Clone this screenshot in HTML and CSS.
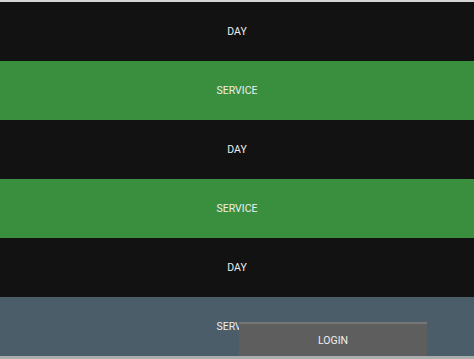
FILE: index.html
```html
<!DOCTYPE html>
<html lang="en">
<head>
    <meta charset="UTF-8">
    <meta name="viewport" content="width=device-width, initial-scale=1.0">
    <title>Schedule</title>
    <link rel="stylesheet" href="styles.css">
</head>
<body>
    <div id="screen">
        <div class="list">
            <div class="row day">DAY</div>
            <div class="row service">SERVICE</div>
            <div class="row day">DAY</div>
            <div class="row service">SERVICE</div>
            <div class="row day">DAY</div>
            <div class="row current">SERVICE</div>
        </div>
        <button class="login">LOGIN</button>
    </div>
    <div class="footer"></div>
</body>
</html>
```
FILE: styles.css
```css
html, body {
    height: 100%;
}
body {
    font-family: Roboto, "Liberation Sans", sans-serif;
    background-color: #d4d4d4;
    margin: 0;
    padding: 2px 0 0 0;
    box-sizing: border-box;
    display: flex;
    flex-direction: column;
}
#screen {
    position: relative;
    flex: 1;
    display: flex;
    flex-direction: column;
}
.list {
    flex: 1;
    display: flex;
    flex-direction: column;
}
.row {
    flex: 1;
    display: flex;
    align-items: center;
    justify-content: center;
    color: #eeeeee;
    font-size: 10.5px;
}
.day {
    background-color: #121212;
}
.service {
    background-color: #3a8f3f;
}
.current {
    background-color: #4a5d68;
}
.login {
    position: absolute;
    left: 239px;
    bottom: 0;
    width: 188px;
    height: 34px;
    background-color: #5f5e5e;
    border: none;
    border-top: 2px solid #767676;
    color: #eeeeee;
    font-family: Roboto, "Liberation Sans", sans-serif;
    font-size: 10.5px;
    padding: 0;
}
.footer {
    height: 3px;
    background-color: #a9aeae;
}
```
